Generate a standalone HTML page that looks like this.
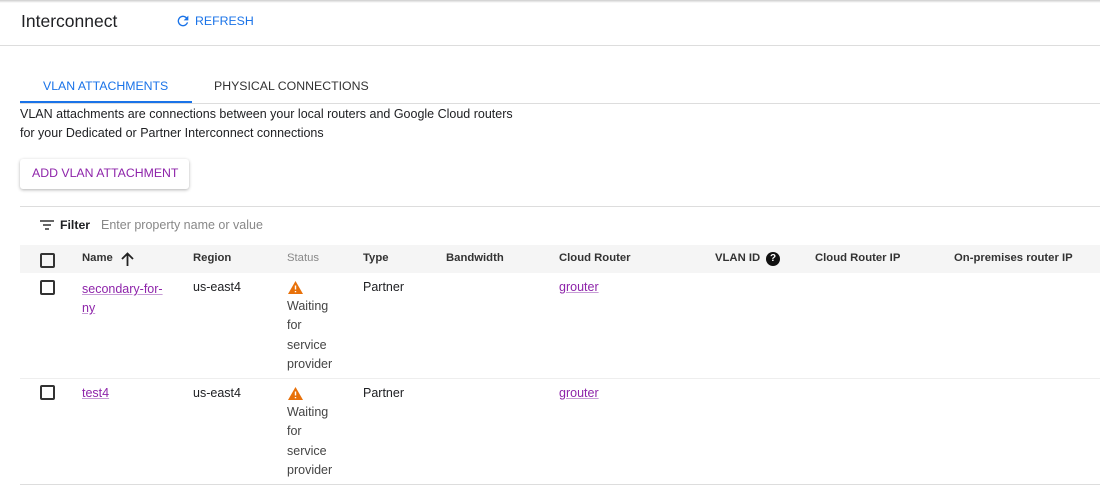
<!DOCTYPE html>
<html><head><style>
*{margin:0;padding:0;box-sizing:border-box}
body{width:1100px;height:488px;background:#fff;font-family:"Liberation Sans",sans-serif;color:#202124;position:relative;overflow:hidden}
.a{position:absolute;white-space:nowrap}
.s{font-size:12.5px}
.h{font-size:11.3px;font-weight:bold;color:#333}
.lk{color:#8e24aa;text-decoration:underline;text-decoration-color:#c79cd6;font-size:12.5px}
.cb{position:absolute;width:15px;height:15px;border:2px solid #333;border-radius:2px}
.st{font-size:12.5px;color:#444;line-height:19.3px;white-space:normal;width:45px}
</style></head><body>
<div class="a" style="left:0;top:0;width:1100px;height:3px;background:linear-gradient(#ccc,#fff)"></div>
<div class="a" style="left:21px;top:11px;font-size:17.5px">Interconnect</div>
<svg class="a" style="left:175px;top:13px" width="16" height="16" viewBox="0 0 24 24"><path d="M17.65 6.35A8 8 0 1 0 19.73 14h-2.08A6 6 0 1 1 12 6c1.66 0 3.14.69 4.22 1.78L13 11h7V4z" fill="#1a73e8"/></svg>
<div class="a" style="left:195px;top:14px;font-size:12.3px;color:#1a73e8">REFRESH</div>
<div class="a" style="left:0;top:45px;width:1100px;height:1px;background:#ddd"></div>
<div class="a" style="left:43px;top:79px;font-size:12.3px;color:#1a73e8">VLAN ATTACHMENTS</div>
<div class="a" style="left:214px;top:79px;font-size:12.3px;color:#333">PHYSICAL CONNECTIONS</div>
<div class="a" style="left:20px;top:103px;width:1080px;height:1px;background:#ddd"></div>
<div class="a" style="left:20px;top:101px;width:172px;height:2px;background:#1a73e8"></div>
<div class="a s" style="left:20px;top:107px">VLAN attachments are connections between your local routers and Google Cloud routers</div>
<div class="a s" style="left:20px;top:126px">for your Dedicated or Partner Interconnect connections</div>
<div class="a" style="left:20px;top:159px;width:169px;height:30px;box-shadow:0 1px 3px rgba(0,0,0,.3);border-radius:3px"></div>
<div class="a" style="left:32px;top:166px;font-size:12.3px;color:#8e24aa">ADD VLAN ATTACHMENT</div>
<div class="a" style="left:20px;top:206px;width:1080px;height:1px;background:#ddd"></div>
<svg class="a" style="left:40px;top:220px" width="14" height="10" viewBox="0 0 14 10"><path d="M0 1h14M3 5h8M5 9h4" stroke="#333" stroke-width="1.6"/></svg>
<div class="a" style="left:60px;top:218px;font-size:12.3px;font-weight:bold">Filter</div>
<div class="a" style="left:101px;top:218px;font-size:12.5px;color:#888">Enter property name or value</div>
<div class="a" style="left:20px;top:245px;width:1080px;height:28px;background:#f5f5f5"></div>
<div class="cb" style="left:40px;top:253px"></div>
<div class="a h" style="left:82px;top:252px">Name</div>
<svg class="a" style="left:121px;top:252px" width="13" height="14" viewBox="0 0 13 14"><path d="M6.5 14V2M1 7l5.5-5.5L12 7" stroke="#222" stroke-width="1.8" fill="none"/></svg>
<div class="a h" style="left:193px;top:252px">Region</div>
<div class="a" style="left:287px;top:252px;font-size:11.3px;color:#888">Status</div>
<div class="a h" style="left:363px;top:252px">Type</div>
<div class="a h" style="left:446px;top:252px">Bandwidth</div>
<div class="a h" style="left:559px;top:252px">Cloud Router</div>
<div class="a h" style="left:715px;top:252px">VLAN ID</div>
<div class="a" style="left:766px;top:252px;width:14px;height:14px;border-radius:50%;background:#111;color:#fff;font-size:10px;font-weight:bold;text-align:center;line-height:14px">?</div>
<div class="a h" style="left:815px;top:252px">Cloud Router IP</div>
<div class="a h" style="left:954px;top:252px">On-premises router IP</div>

<div class="cb" style="left:40px;top:280px"></div>
<div class="a lk" style="left:82px;top:280px;line-height:19px">secondary-for-<br>ny</div>
<div class="a s" style="left:193px;top:280px">us-east4</div>
<svg class="a" style="left:288px;top:281px" width="15" height="13" viewBox="0 0 15 13"><path d="M7.5 0L15 13H0z" fill="#e8710a"/><path d="M7.5 4.5v4M7.5 10v1.3" stroke="#fff" stroke-width="1.4"/></svg>
<div class="a st" style="left:287px;top:297px">Waiting for service provider</div>
<div class="a s" style="left:363px;top:280px">Partner</div>
<div class="a lk" style="left:559px;top:280px">grouter</div>
<div class="a" style="left:20px;top:378px;width:1080px;height:1px;background:#eee"></div>

<div class="cb" style="left:40px;top:385px"></div>
<div class="a lk" style="left:82px;top:386px">test4</div>
<div class="a s" style="left:193px;top:386px">us-east4</div>
<svg class="a" style="left:288px;top:387px" width="15" height="13" viewBox="0 0 15 13"><path d="M7.5 0L15 13H0z" fill="#e8710a"/><path d="M7.5 4.5v4M7.5 10v1.3" stroke="#fff" stroke-width="1.4"/></svg>
<div class="a st" style="left:287px;top:403px">Waiting for service provider</div>
<div class="a s" style="left:363px;top:386px">Partner</div>
<div class="a lk" style="left:559px;top:386px">grouter</div>
<div class="a" style="left:20px;top:484px;width:1080px;height:1px;background:#ddd"></div>
</body></html>
